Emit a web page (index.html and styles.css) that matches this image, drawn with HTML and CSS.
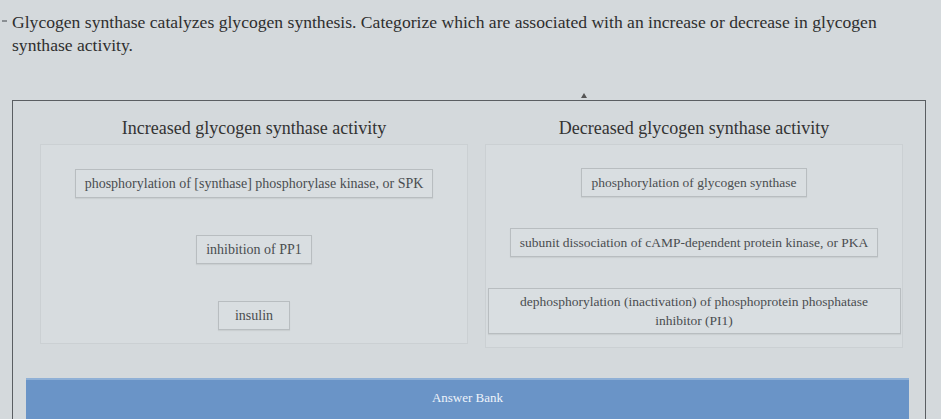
FILE: index.html
```html
<!DOCTYPE html>
<html lang="en">
<head>
    <meta charset="UTF-8">
    <meta name="viewport" content="width=device-width, initial-scale=1.0">
    <title>Glycogen synthase | Categorize</title>
    <link rel="stylesheet" href="styles.css">
</head>
<body>
    <span class="q-marker"></span>
    <p class="question">Glycogen synthase catalyzes glycogen synthesis. Categorize which are associated with an increase or decrease in glycogen synthase activity.</p>

    <section class="sorter">
        <span class="drag-dot"></span>
        <div class="bins">
            <div class="bin-col">
                <h3>Increased glycogen synthase activity</h3>
                <div class="bin bin-left">
                    <div class="card">phosphorylation of [synthase] phosphorylase kinase, or SPK</div>
                    <div class="card">inhibition of PP1</div>
                    <div class="card card-short">insulin</div>
                </div>
            </div>
            <div class="bin-col bin-col-right">
                <h3>Decreased glycogen synthase activity</h3>
                <div class="bin bin-right">
                    <div class="card">phosphorylation of glycogen synthase</div>
                    <div class="card">subunit dissociation of cAMP-dependent protein kinase, or PKA</div>
                    <div class="card card-wide">dephosphorylation (inactivation) of phosphoprotein phosphatase inhibitor (PI1)</div>
                </div>
            </div>
        </div>

        <div class="answer-bank">Answer Bank</div>
    </section>
</body>
</html>
```

FILE: styles.css
```css
* {
    box-sizing: border-box;
}

body {
    font-family: "Liberation Serif", "Times New Roman", serif;
    margin: 0;
    padding: 11px 0 0;
    background: #d4d9dc;
    color: #333;
    height: 419px;
    overflow: hidden;
    position: relative;
}

.q-marker {
    position: absolute;
    left: 2px;
    top: 20px;
    width: 5px;
    height: 2px;
    background: #8a8f93;
}

.question {
    margin: 0 0 0 12px;
    max-width: 900px;
    font-size: 17.6px;
    line-height: 23px;
    color: #2e2e2e;
}

.sorter {
    position: relative;
    margin: 43px 0 0 12px;
    width: 914px;
    padding: 0 16px 0 13px;
    border: 1px solid #5a5e62;
    border-bottom: none;
    height: 330px;
}

.drag-dot {
    position: absolute;
    left: 568px;
    top: -8px;
    width: 0;
    height: 0;
    border-left: 3px solid transparent;
    border-right: 3px solid transparent;
    border-bottom: 5px solid #555;
}

.bins {
    display: flex;
    gap: 17px;
    padding: 18px 0 0 14px;
}

.bin-col {
    width: 428px;
}

.bin-col-right {
    width: 418px;
}

.bin-col h3 {
    margin: 0 0 6px;
    font-size: 18px;
    font-weight: normal;
    line-height: 19px;
    text-align: center;
    color: #333;
}

.bin {
    display: flex;
    flex-direction: column;
    align-items: center;
    padding: 24px 2px 13px;
    border: 1px solid #cbd0d3;
    background: #d7dcdf;
}

.bin-left {
    gap: 37px;
}

.bin-right {
    gap: 31px;
    padding-top: 23px;
}

.card {
    padding: 5px 9px;
    font-size: 14px;
    line-height: 17px;
    text-align: center;
    color: #4a4d50;
    background: #d9dee1;
    border: 1px solid #b8bdc0;
    box-shadow: 0 1px 1px rgba(0, 0, 0, 0.06);
}

.bin-right .card {
    font-size: 13.5px;
}

.card-short {
    padding: 5px 16px;
}

.card-wide {
    width: 413px;
    padding: 3px 30px;
    line-height: 19px;
}

.answer-bank {
    margin-top: 30px;
    height: 44px;
    line-height: 36px;
    background: #6a94c7;
    border-top: 2px solid #8fb0d6;
    color: #eef3fa;
    font-size: 13px;
    text-align: center;
}
```
